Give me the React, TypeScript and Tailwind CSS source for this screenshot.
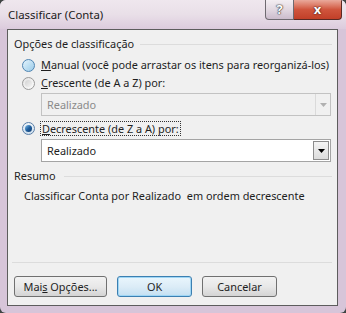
import React from "react";

function Radio({ state }: { state: "hover" | "off" | "on" }) {
  if (state === "on") {
    return (
      <span className="w-[13px] h-[13px] rounded-full border border-[#5b7fa8] bg-gradient-to-b from-[#eef4f9] to-[#cfe0ee] flex items-center justify-center shrink-0">
        <span className="w-[7px] h-[7px] rounded-full bg-gradient-to-br from-[#7fc0ec] via-[#1f5f9e] to-[#123c70]" />
      </span>
    );
  }
  if (state === "hover") {
    return (
      <span className="w-[13px] h-[13px] rounded-full border border-[#4f86b3] bg-gradient-to-br from-[#e3f3fc] to-[#9ccbe8] flex items-center justify-center shrink-0">
        <span className="w-[7px] h-[7px] rounded-full bg-gradient-to-br from-[#d6edf9] to-[#a6d2ec]" />
      </span>
    );
  }
  return (
    <span className="w-[13px] h-[13px] rounded-full border border-[#9a9a9a] bg-gradient-to-br from-[#e4e4e4] to-[#fbfbfb] flex items-center justify-center shrink-0">
      <span className="w-[7px] h-[7px] rounded-full bg-gradient-to-br from-[#d2d2d2] to-[#f4f4f4]" />
    </span>
  );
}

function Arrow({ color }: { color: string }) {
  return (
    <svg width="7" height="4" viewBox="0 0 7 4">
      <path d="M0 0 H7 L3.5 4 Z" fill={color} />
    </svg>
  );
}

export default function App() {
  return (
    <div
      className="w-[346px] h-[313px] bg-[#3f4544] text-[#1e1e1e] whitespace-nowrap"
      style={{ fontFamily: '"Noto Sans", "Open Sans", sans-serif' }}
    >
      <div className="w-[346px] h-[313px] rounded-[6px] bg-[#d7c5d9] flex flex-col overflow-hidden">
        <div className="h-[29px] flex justify-between pl-[8px] pr-[6px] bg-gradient-to-b from-[#efe7ee] via-[#e9dfe8] to-[#dccbdd]">
          <span className="pt-[7px] text-[11.4px] leading-[16px] text-[#1a1a1a]">Classificar (Conta)</span>
          <div className="flex h-[20px] mr-[-2px]">
            <div className="w-[29px] h-[20px] border border-[#6e6a70] border-t-0 rounded-bl-[4px] bg-gradient-to-b from-[#f3eef2] via-[#e2d8e1] to-[#cbbccc] flex items-center justify-center">
              <span className="text-[13px] leading-[13px] font-bold text-white" style={{ textShadow: "0 0 1px #333, 0 0 1px #333, 0 0 2px #555" }}>?</span>
            </div>
            <div className="w-[48px] h-[20px] border border-[#5a2a24] border-t-0 border-l-0 rounded-br-[4px] bg-gradient-to-b from-[#e9a99b] via-[#d0553d] to-[#c23f28] flex items-center justify-center">
              <span className="text-[13px] leading-[13px] font-bold text-white" style={{ textShadow: "0 0 1px #4a1a12, 0 0 2px #4a1a12" }}>x</span>
            </div>
          </div>
        </div>

        <div className="ml-[7px] w-[331px] h-[277px] border border-[#5d5d5d] bg-[#f0f0f0] flex flex-col text-[10.9px]">
          <div className="mt-[6px] h-[16px] flex items-center pl-[6px] pr-[5px]">
            <span className="leading-[16px]">Opções de classificação</span>
            <div className="flex-1 ml-[6px] h-px bg-[#dcdcdc]" />
          </div>

          <div className="mt-[4px] h-[18px] flex items-center pl-[14px] gap-[6px]">
            <Radio state="hover" />
            <span className="leading-[16px]"><u>M</u>anual (você pode arrastar os itens para reorganizá-los)</span>
          </div>
          <div className="h-[18px] flex items-center pl-[14px] gap-[6px]">
            <Radio state="off" />
            <span className="leading-[16px]"><u>C</u>rescente (de A a Z) por:</span>
          </div>
          <div className="mt-[1px] ml-[33px] w-[290px] h-[23px] border border-[#c2c2c2] bg-[#f0f0f0] flex">
            <span className="flex-1 pl-[5px] leading-[21px] text-[#8a8a8a]">Realizado</span>
            <div className="w-[15px] border-l border-[#dadada] flex items-center justify-center">
              <Arrow color="#b0b0b0" />
            </div>
          </div>

          <div className="mt-[3px] h-[18px] flex items-center pl-[14px] gap-[5px]">
            <Radio state="on" />
            <span className="leading-[13px] border border-dotted border-[#333] px-[1px]"><u>D</u>ecrescente (de Z a A) por:</span>
          </div>
          <div className="mt-[2px] ml-[33px] w-[290px] h-[23px] border border-[#a4a4a4] bg-white flex">
            <span className="flex-1 pl-[5px] leading-[21px]">Realizado</span>
            <div className="w-[16px] h-[19px] mt-[1px] mr-[1px] border border-[#8c8c8c] bg-gradient-to-b from-[#f4f4f4] to-[#dcdcdc] flex items-center justify-center">
              <Arrow color="#000" />
            </div>
          </div>

          <div className="mt-[6px] h-[16px] flex items-center pl-[6px] pr-[5px]">
            <span className="leading-[16px]">Resumo</span>
            <div className="flex-1 ml-[8px] h-px bg-[#dcdcdc]" />
          </div>
          <div className="mt-[4px] h-[16px] pl-[16px] leading-[16px]">
            Classificar Conta por Realizado&nbsp; em ordem decrescente
          </div>

          <div className="mt-auto mx-[4px] mr-[5px] h-px bg-[#dcdcdc]" />
          <div className="mt-[13px] mb-[8px] h-[21px] flex gap-[10px] pl-[6px]">
            <button className="w-[93px] h-[21px] rounded-[3px] border border-[#707070] bg-gradient-to-b from-[#f2f2f2] via-[#e8e8e8] to-[#d4d4d4] leading-[19px]">
              Mai<u>s</u> Opções...
            </button>
            <button className="w-[75px] h-[21px] rounded-[3px] border border-[#3c7fb1] bg-gradient-to-b from-[#eaf6fd] via-[#dcecf7] to-[#c4e0f2] leading-[19px] shadow-[inset_0_0_0_1px_#9fd6f5]">
              OK
            </button>
            <button className="w-[75px] h-[21px] rounded-[3px] border border-[#707070] bg-gradient-to-b from-[#f2f2f2] via-[#e8e8e8] to-[#d4d4d4] leading-[19px]">
              Cancelar
            </button>
          </div>
        </div>
      </div>
    </div>
  );
}
